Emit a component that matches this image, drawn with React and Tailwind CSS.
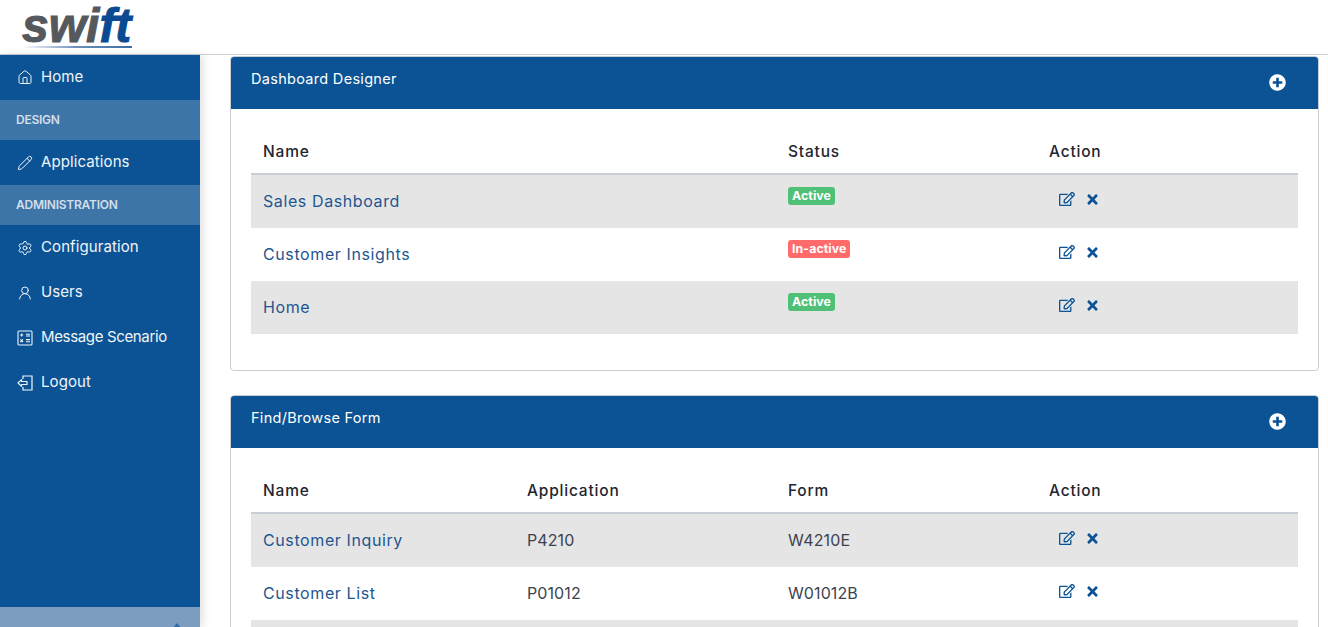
import React from "react";
import { FaRegEdit, FaTimes, FaPlusCircle } from "react-icons/fa";
import { House, Pencil, Settings, UserRound } from "lucide-react";

const CalcIcon = () => (
  <svg width="16" height="16" viewBox="0 0 16 16" fill="none" stroke="currentColor" strokeWidth="1.1">
    <rect x="1" y="1" width="14" height="14" rx="1" />
    <path d="M3.2 5h3M4.7 3.5v3M9 4.2h4M9 6h4M3.4 9.4l2.6 2.6M6 9.4l-2.6 2.6M9 9.6h4M9 11.8h4" />
  </svg>
);
const LogoutIcon = () => (
  <svg width="16" height="16" viewBox="0 0 16 16" fill="none" stroke="currentColor" strokeWidth="1.2">
    <path d="M6 4V1h9v14H6v-3" />
    <path d="M1 8l3.6-3.4V6.5H10v3H4.6v1.9z" strokeLinejoin="round" />
  </svg>
);

const Item = ({ icon, label, track = "tracking-[0.1px]" }) => (
  <div className={`h-[45px] flex items-center pl-[17px] gap-[8px] text-[15px] ${track} text-[#f1f5f9]`}>
    <span className="w-[16px] flex justify-center">{icon}</span>
    <span>{label}</span>
  </div>
);
const Section = ({ label }) => (
  <div className="h-[40px] flex items-center pl-4 bg-[#3d75a8] text-[12px] font-semibold tracking-[-0.25px] text-[#d5dfea]">
    {label}
  </div>
);

const Actions = () => (
  <div className="flex items-center gap-[10px] text-[#0b5394] -mt-[3px]">
    <FaRegEdit size={16} className="ml-[10px]" />
    <FaTimes size={15} />
  </div>
);
const Badge = ({ red, children }) => (
  <span className={`block w-fit rounded-[3px] px-[4px] h-[18px] leading-[18px] text-[12.3px] font-bold text-white ${red ? "bg-[#ff6b6b]" : "bg-[#4fc076]"}`}>
    {children}
  </span>
);

const Card = ({ title, bottom, children }) => (
  <section className={`border border-[#c9ced6] rounded-[4px] overflow-hidden ${bottom}`}>
    <div className="h-[52px] bg-[#0b5394] flex justify-between pl-5 pr-[32px] text-white">
      <div className="text-[14.5px] tracking-[0.3px] pt-[11px]">{title}</div>
      <FaPlusCircle size={17} className="mt-[17px]" />
    </div>
    <div className="px-5 pt-[21px]">{children}</div>
  </section>
);

const Th = ({ w, children }) => (
  <th className={`${w} h-[45px] px-3 text-left font-medium text-[15.5px] tracking-[0.8px] text-[#1f2530] border-b-2 border-[#c9ced6]`}>{children}</th>
);
const Td = ({ children, link, top }) => (
  <td className={`h-[53px] px-3 pb-[2px] ${top ? "align-top pt-[12px]" : ""} ${link ? "text-[#1f5590] tracking-[0.6px]" : "text-[#3c4350] tracking-[0.1px]"} text-[16px]`}>{children}</td>
);

export default function App() {
  const font = { fontFamily: "Inter, 'Open Sans', sans-serif" };
  return (
    <div className="h-screen overflow-hidden bg-white flex flex-col" style={font}>
      <header className="h-[55px] shrink-0 border-b border-[#c9ced6]">
        <div className="pl-[22px] h-[54px]">
          <div className="h-[46px] pt-[6px] text-[48px] leading-[40px] font-bold italic [-webkit-text-stroke:1px_currentColor]" style={{ fontFamily: "'Liberation Sans', sans-serif" }}>
            <span className="text-[#55585c]">swi</span><span className="text-[#0b4a92]">ft</span>
          </div>
          <div className="w-[110px] h-[2px] bg-gradient-to-r from-transparent via-[#6d8fbb] to-[#3e6ba6]" />
        </div>
      </header>
      <div className="flex-1 flex min-h-0">
        <aside className="w-[200px] shrink-0 bg-[#0b5394] flex flex-col shadow-[3px_0_8px_rgba(0,0,0,0.12)]">
          <Item icon={<House size={17} strokeWidth={1.5} />} label="Home" />
          <Section label="DESIGN" />
          <Item icon={<Pencil size={16} strokeWidth={1.5} />} label="Applications" />
          <Section label="ADMINISTRATION" />
          <Item icon={<Settings size={16} strokeWidth={1.5} />} label="Configuration" />
          <Item icon={<UserRound size={18} strokeWidth={1.5} />} label="Users" />
          <Item icon={<CalcIcon />} label="Message Scenario" track="tracking-[-0.35px]" />
          <Item icon={<LogoutIcon />} label="Logout" />
          <div className="mt-auto h-[20px] bg-[#7c9dbf] relative overflow-hidden">
            <span className="absolute left-[173px] top-[16px] w-0 h-0 border-x-[4px] border-x-transparent border-b-[5px] border-b-[#2f6aa3]" />
          </div>
        </aside>
        <main className="flex-1 min-w-0 pl-[30px] pr-[9px] pt-[1px] overflow-hidden">
          <Card title="Dashboard Designer" bottom="h-[315px] mb-[24px]">
            <table className="w-[1047px] table-fixed border-separate border-spacing-0">
              <thead><tr><Th w="w-[525px]">Name</Th><Th w="w-[261px]">Status</Th><Th w="w-[261px]">Action</Th></tr></thead>
              <tbody>
                <tr className="bg-[#e5e5e5]"><Td link>Sales Dashboard</Td><Td top><Badge>Active</Badge></Td><Td><Actions /></Td></tr>
                <tr><Td link>Customer Insights</Td><Td top><Badge red>In-active</Badge></Td><Td><Actions /></Td></tr>
                <tr className="bg-[#e5e5e5]"><Td link>Home</Td><Td top><Badge>Active</Badge></Td><Td><Actions /></Td></tr>
              </tbody>
            </table>
          </Card>
          <Card title="Find/Browse Form" bottom="">
            <table className="w-[1047px] table-fixed border-separate border-spacing-0">
              <thead><tr><Th w="w-[264px]">Name</Th><Th w="w-[261px]">Application</Th><Th w="w-[261px]">Form</Th><Th w="w-[261px]">Action</Th></tr></thead>
              <tbody>
                <tr className="bg-[#e5e5e5]"><Td link>Customer Inquiry</Td><Td>P4210</Td><Td>W4210E</Td><Td><Actions /></Td></tr>
                <tr><Td link>Customer List</Td><Td>P01012</Td><Td>W01012B</Td><Td><Actions /></Td></tr>
                <tr className="bg-[#e5e5e5]"><Td /><Td /><Td /><Td /></tr>
              </tbody>
            </table>
          </Card>
        </main>
      </div>
    </div>
  );
}
